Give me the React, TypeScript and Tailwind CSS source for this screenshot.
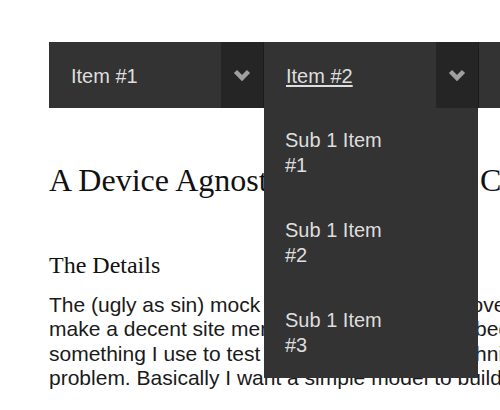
import React from "react";

function Chevron() {
  return (
    <svg width="18" height="13" viewBox="0 0 18 13" aria-hidden="true">
      <polyline
        points="2.5,2.5 9,9 15.5,2.5"
        fill="none"
        stroke="#a0a0a0"
        strokeWidth="4.5"
        strokeLinejoin="miter"
        strokeLinecap="butt"
      />
    </svg>
  );
}

function NavItem({
  label,
  active,
  children,
}: {
  label: string;
  active?: boolean;
  children?: React.ReactNode;
}) {
  return (
    <li className="relative flex h-full w-[215px] shrink-0 border-r border-[#1c1c1c]">
      <a
        href="#"
        className={
          "flex flex-1 items-center pl-[22px] pt-[2px] text-[20px] leading-[23px] text-[#dedede] " +
          (active ? "underline underline-offset-2" : "no-underline")
        }
      >
        {label}
      </a>
      <span className="flex h-full w-[42px] items-center justify-center bg-[#252525]">
        <Chevron />
      </span>
      {children}
    </li>
  );
}

export default function App() {
  const sub = ["Sub 1 Item #1", "Sub 1 Item #2", "Sub 1 Item #3"];
  return (
    <div
      className="relative h-[410px] w-[500px] overflow-hidden bg-white"
      style={{ fontFamily: '"Liberation Sans", Arial, sans-serif' }}
    >
      <div className="w-[1100px] pl-[49px]">
        <nav className="mt-[42px] h-[66px] w-[1000px] bg-[#333333]">
          <ul className="m-0 flex h-full list-none p-0">
            <NavItem label="Item #1" />
            <NavItem label="Item #2" active>
              <ul className="absolute left-0 top-full z-10 m-0 w-[214px] list-none bg-[#333333] p-0">
                {sub.map((s) => (
                  <li key={s}>
                    <a
                      href="#"
                      className="block py-5 pl-[21px] pr-[84px] text-[20px] leading-[25px] text-[#dedede] no-underline"
                    >
                      {s}
                    </a>
                  </li>
                ))}
              </ul>
            </NavItem>
            <NavItem label="Item #3" />
          </ul>
        </nav>

        <h1
          className="mt-[54px] whitespace-nowrap text-[32px] font-normal leading-[36px] text-[#111111]"
          style={{ fontFamily: '"Liberation Serif", "Times New Roman", serif' }}
        >
          A Device Agnostic Popout Menu Concept
        </h1>

        <h2
          className="mt-[53px] text-[24px] font-normal leading-[28px] text-[#111111]"
          style={{ fontFamily: '"Liberation Serif", "Times New Roman", serif' }}
        >
          The Details
        </h2>

        <p className="mt-[14px] whitespace-nowrap text-[21px] leading-[24.33px] text-[#1a1a1a]">
          The (ugly as sin) mock up we see pictured above is my attempt to
          <br />
          make a decent site menu that works as described in the article,
          <br />
          something I use to test out any new layout technique on a real
          <br />
          problem. Basically I want a simple model to build upon and extend.
        </p>
      </div>
    </div>
  );
}
